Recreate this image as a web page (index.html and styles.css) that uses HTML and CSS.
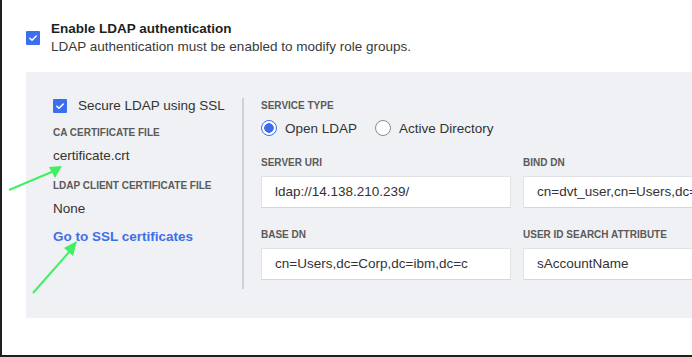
FILE: index.html
```html
<!DOCTYPE html>
<html lang="en">

<head>
    <title>LDAP authentication</title>
    <link rel="stylesheet" href="styles.css">
</head>

<body>
    <div class="frame">
        <!-- Enable toggle -->
        <div class="enable-row">
            <span class="checkbox">
                <svg viewBox="0 0 14 14" width="14" height="14"><path d="M3.8 7.2 L6 9.3 L10.3 5" fill="none" stroke="#fff" stroke-width="1.5" stroke-linecap="round" stroke-linejoin="round"/></svg>
            </span>
            <div class="enable-text">
                <div class="enable-title">Enable LDAP authentication</div>
                <div class="enable-help">LDAP authentication must be enabled to modify role groups.</div>
            </div>
        </div>

        <div class="panel">
            <!-- SSL settings -->
            <div class="ssl-column">
                <div class="ssl-row">
                    <span class="checkbox">
                        <svg viewBox="0 0 14 14" width="14" height="14"><path d="M3.8 7.2 L6 9.3 L10.3 5" fill="none" stroke="#fff" stroke-width="1.5" stroke-linecap="round" stroke-linejoin="round"/></svg>
                    </span>
                    <span class="ssl-label">Secure LDAP using SSL</span>
                </div>
                <div class="field-label first">CA CERTIFICATE FILE</div>
                <div class="field-value">certificate.crt</div>
                <div class="field-label">LDAP CLIENT CERTIFICATE FILE</div>
                <div class="field-value">None</div>
                <a class="ssl-link" href="#">Go to SSL certificates</a>
            </div>

            <!-- Server settings -->
            <div class="server-column">
                <div class="field-label">SERVICE TYPE</div>
                <div class="radio-row">
                    <label class="radio-option"><span class="radio checked"></span>Open LDAP</label>
                    <label class="radio-option"><span class="radio"></span>Active Directory</label>
                </div>
                <div class="input-grid">
                    <div class="input-group">
                        <div class="field-label">SERVER URI</div>
                        <div class="text-input">ldap://14.138.210.239/</div>
                    </div>
                    <div class="input-group">
                        <div class="field-label">BIND DN</div>
                        <div class="text-input">cn=dvt_user,cn=Users,dc=Corp,dc=ibm,dc=com</div>
                    </div>
                    <div class="input-group">
                        <div class="field-label">BASE DN</div>
                        <div class="text-input">cn=Users,dc=Corp,dc=ibm,dc=c</div>
                    </div>
                    <div class="input-group">
                        <div class="field-label">USER ID SEARCH ATTRIBUTE</div>
                        <div class="text-input">sAccountName</div>
                    </div>
                </div>
            </div>
        </div>

        <!-- Green annotation arrows -->
        <svg class="arrows" width="692" height="357" viewBox="0 0 692 357">
            <line x1="9" y1="190" x2="54" y2="171" stroke="#3ef062" stroke-width="2" />
            <polygon points="62,166 49,167 55,178" fill="#3ef062" />
            <line x1="33" y1="293" x2="70" y2="251" stroke="#3ef062" stroke-width="2" />
            <polygon points="77,241 64,248 73,256" fill="#3ef062" />
        </svg>
    </div>
</body>

</html>
```

FILE: styles.css
```css
body {
    margin: 0;
    background-color: #ffffff;
    font-family: "Liberation Sans", Arial, sans-serif;
    color: #333333;
}

.frame {
    position: relative;
    width: 692px;
    height: 357px;
    box-sizing: border-box;
    border-left: 2px solid #1e1e1e;
    border-bottom: 2px solid #1e1e1e;
    overflow: hidden;
    padding-top: 20px;
}

.checkbox {
    display: flex;
    align-items: center;
    justify-content: center;
    width: 14px;
    height: 14px;
    flex-shrink: 0;
    border-radius: 1px;
    background-color: #3c6ff0;
}

.enable-row {
    display: flex;
    align-items: center;
    gap: 11px;
    padding-left: 24px;
}

.enable-text {
    font-size: 13.5px;
    line-height: 18px;
}

.enable-title {
    font-weight: 700;
    color: #1f1f1f;
}

.enable-help {
    color: #3a3a3a;
}

.panel {
    display: flex;
    margin-top: 16px;
    margin-left: 24px;
    padding: 26px 0 29px 27px;
    background-color: #f0f1f4;
}

.ssl-column {
    display: flex;
    flex-direction: column;
    align-items: flex-start;
    flex-shrink: 0;
    width: 189px;
    white-space: nowrap;
}

.ssl-row {
    display: flex;
    align-items: center;
    gap: 11px;
    height: 15px;
    font-size: 13.5px;
    color: #333;
}

.field-label {
    font-size: 10px;
    line-height: 14px;
    font-weight: 700;
    color: #5a5a5a;
    margin-top: 14px;
}

.field-label.first {
    margin-top: 13px;
}

.field-value {
    font-size: 13.5px;
    line-height: 18px;
    margin-top: 7px;
    color: #333;
}

.ssl-link {
    margin-top: 10px;
    font-size: 13.5px;
    line-height: 18px;
    font-weight: 700;
    color: #3f6fe8;
    text-decoration: none;
}

.server-column {
    flex-shrink: 0;
    border-left: 2px solid #cfd0d4;
    padding: 1px 0 9px 17px;
}

.server-column > .field-label {
    margin-top: 0;
}

.radio-row {
    display: flex;
    align-items: center;
    gap: 18px;
    margin-top: 6px;
    height: 18px;
    font-size: 13.5px;
    color: #333;
}

.radio-option {
    display: flex;
    align-items: center;
    gap: 8px;
}

.radio {
    width: 14px;
    height: 14px;
    border-radius: 50%;
    border: 1.5px solid #8a8a8a;
    background-color: #ffffff;
}

.radio.checked {
    border-color: #3c6ff0;
    background: radial-gradient(circle, #3c6ff0 0 4.5px, #ffffff 5px);
}

.input-grid {
    display: grid;
    grid-template-columns: 250px 250px;
    column-gap: 12px;
    row-gap: 20px;
    margin-top: 19px;
}

.input-group .field-label {
    margin-top: 0;
}

.text-input {
    margin-top: 6px;
    height: 32px;
    box-sizing: border-box;
    padding-left: 13px;
    border: 1px solid #e2e3e6;
    border-bottom-color: #d6d7da;
    background-color: #ffffff;
    font-size: 13.5px;
    line-height: 30px;
    color: #333;
    white-space: nowrap;
    overflow: hidden;
}

.arrows {
    position: absolute;
    top: 0;
    left: -2px;
    pointer-events: none;
}
```
